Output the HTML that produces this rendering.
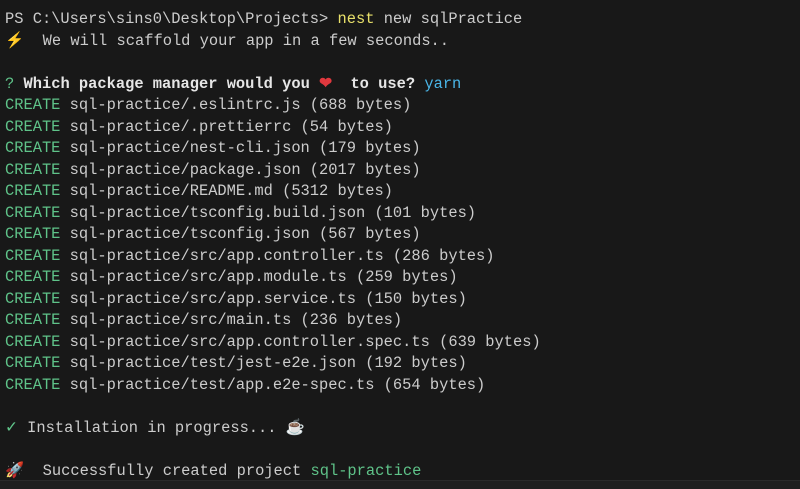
<!DOCTYPE html>
<html><head><meta charset="utf-8"><style>
html,body{margin:0;padding:0;background:#181818;width:800px;height:488px;overflow:hidden}
pre{margin:0;position:absolute;left:5px;top:9px;font-family:"Liberation Mono",monospace;font-size:15.4px;line-height:21.5px;color:#cccccc}
.g{color:#5fc389}.y{color:#e8e06a}.c{color:#4ab6e8}.b{font-weight:bold;color:#e6e6e6}
.bar{position:absolute;left:0;top:480px;width:800px;height:8px;background:#1f1f1f;border-top:1px solid #2a2a2a}
</style></head><body>
<pre>PS C:\Users\sins0\Desktop\Projects&gt; <span class="y">nest</span> new sqlPractice
<span style="color:#f5a33a">⚡</span>  We will scaffold your app in a few seconds..

<span class="g">?</span> <span class="b">Which package manager would you <span style="color:#e0383e">❤</span>  to use?</span> <span class="c">yarn</span>
<span class="g">CREATE</span> sql-practice/.eslintrc.js (688 bytes)
<span class="g">CREATE</span> sql-practice/.prettierrc (54 bytes)
<span class="g">CREATE</span> sql-practice/nest-cli.json (179 bytes)
<span class="g">CREATE</span> sql-practice/package.json (2017 bytes)
<span class="g">CREATE</span> sql-practice/README.md (5312 bytes)
<span class="g">CREATE</span> sql-practice/tsconfig.build.json (101 bytes)
<span class="g">CREATE</span> sql-practice/tsconfig.json (567 bytes)
<span class="g">CREATE</span> sql-practice/src/app.controller.ts (286 bytes)
<span class="g">CREATE</span> sql-practice/src/app.module.ts (259 bytes)
<span class="g">CREATE</span> sql-practice/src/app.service.ts (150 bytes)
<span class="g">CREATE</span> sql-practice/src/main.ts (236 bytes)
<span class="g">CREATE</span> sql-practice/src/app.controller.spec.ts (639 bytes)
<span class="g">CREATE</span> sql-practice/test/jest-e2e.json (192 bytes)
<span class="g">CREATE</span> sql-practice/test/app.e2e-spec.ts (654 bytes)

<span class="g">✓</span> Installation in progress... <span style="color:#8a5a3c">☕</span>

<span style="color:#d04040">🚀</span>  Successfully created project <span class="g">sql-practice</span></pre>
<div class="bar"></div>
</body></html>
